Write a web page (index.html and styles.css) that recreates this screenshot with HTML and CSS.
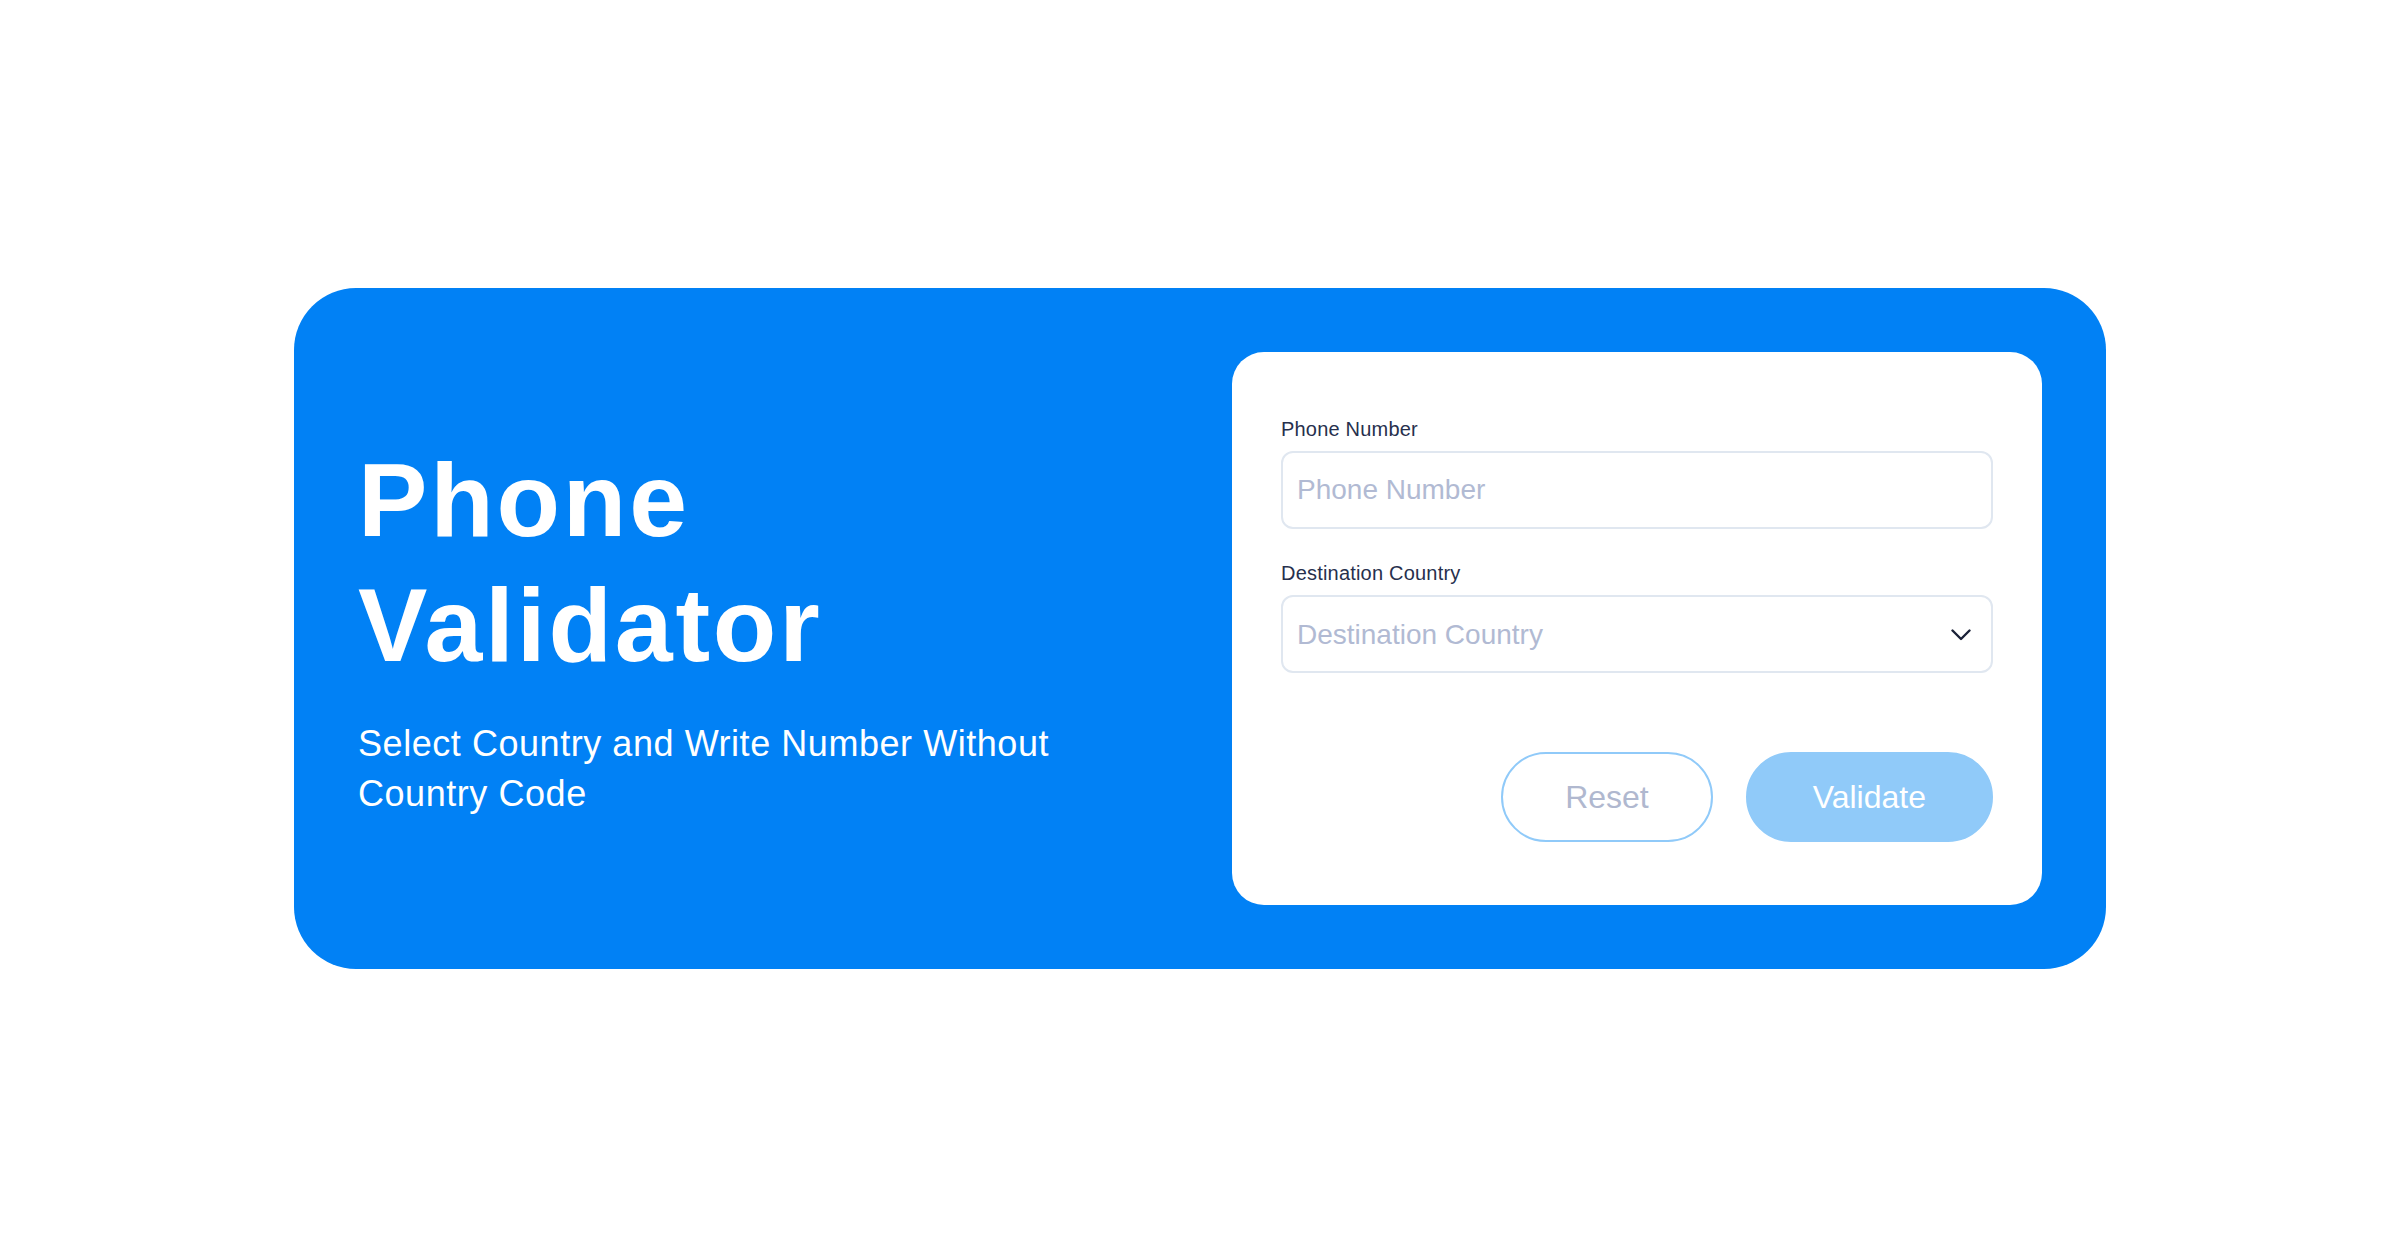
FILE: index.html
```html
<!DOCTYPE html>
<html lang="en">
<head>
<meta charset="utf-8">
<title>Phone Validator</title>
<link rel="stylesheet" href="styles.css">
</head>
<body>
<main class="panel">
  <section class="intro">
    <h1 class="title">Phone<br>Validator</h1>
    <p class="subtitle">Select Country and Write Number Without Country Code</p>
  </section>
  <form class="form-card">
    <div class="field">
      <label class="label" for="phone">Phone Number</label>
      <input class="control" id="phone" type="text" placeholder="Phone Number">
    </div>
    <div class="field">
      <label class="label" for="country">Destination Country</label>
      <div class="control select-wrap">
        <select class="select" id="country">
          <option value="" selected disabled>Destination Country</option>
        </select>
        <svg class="chevron" width="20" height="12" viewBox="0 0 20 12" aria-hidden="true">
          <path d="M1.5 1.5 L10 10 L18.5 1.5" fill="none" stroke="#1b2238" stroke-width="2.4" stroke-linecap="round" stroke-linejoin="round"/>
        </svg>
      </div>
    </div>
    <div class="actions">
      <button class="btn btn-reset" type="reset">Reset</button>
      <button class="btn btn-validate" type="button">Validate</button>
    </div>
  </form>
</main>
</body>
</html>
```

FILE: styles.css
```css
* { box-sizing: border-box; }

html, body {
  margin: 0;
  padding: 0;
  background: #ffffff;
}

body {
  min-height: 100vh;
  display: flex;
  align-items: center;
  justify-content: center;
  padding-bottom: 3px;
  font-family: "Liberation Sans", Arial, sans-serif;
}

.panel {
  width: 1812px;
  background: #0181f5;
  border-radius: 62px;
  padding: 64px;
  display: grid;
  grid-template-columns: 1fr 810px;
  column-gap: 64px;
  align-items: center;
}

.intro {
  color: #ffffff;
}

.title {
  margin: 0;
  font-size: 104px;
  line-height: 1.2;
  font-weight: 700;
  letter-spacing: 2.8px;
}

.subtitle {
  margin: 32px 0 0;
  max-width: 720px;
  font-size: 36px;
  line-height: 50px;
  font-weight: 400;
  letter-spacing: 0.55px;
}

.form-card {
  background: #ffffff;
  border-radius: 32px;
  padding: 63px 49px 63px 49px;
  display: flex;
  flex-direction: column;
}

.field {
  display: flex;
  flex-direction: column;
}

.field + .field {
  margin-top: 30px;
}

.label {
  font-size: 20px;
  line-height: 28px;
  color: #27304d;
  margin-bottom: 8px;
  letter-spacing: 0.2px;
}

.control {
  height: 78px;
  width: 100%;
  border: 2px solid #e0e7f0;
  border-radius: 12px;
  background: #ffffff;
  font-family: "Liberation Sans", Arial, sans-serif;
  font-size: 28px;
  color: #b1bad3;
  padding: 0 14px;
  outline: none;
}

.control::placeholder {
  color: #b1bad3;
}

.select-wrap {
  display: flex;
  align-items: center;
  padding: 0 20px 0 14px;
}

.select {
  flex: 1;
  appearance: none;
  -webkit-appearance: none;
  border: none;
  background: transparent;
  font-family: "Liberation Sans", Arial, sans-serif;
  font-size: 28px;
  color: #b1bad3;
  padding: 0;
  outline: none;
}

.chevron {
  flex: none;
  margin-top: 1px;
}

.actions {
  margin-top: 79px;
  display: flex;
  justify-content: flex-end;
  gap: 33px;
}

.btn {
  height: 90px;
  padding: 0 62px;
  border-radius: 45px;
  border: 2px solid #90caf9;
  font-family: "Liberation Sans", Arial, sans-serif;
  font-size: 32px;
  line-height: 1;
  cursor: pointer;
}

.btn-reset {
  background: #ffffff;
  color: #b0b8cf;
}

.btn-validate {
  background: #90caf9;
  color: #ffffff;
  padding: 0 65px;
}
```
